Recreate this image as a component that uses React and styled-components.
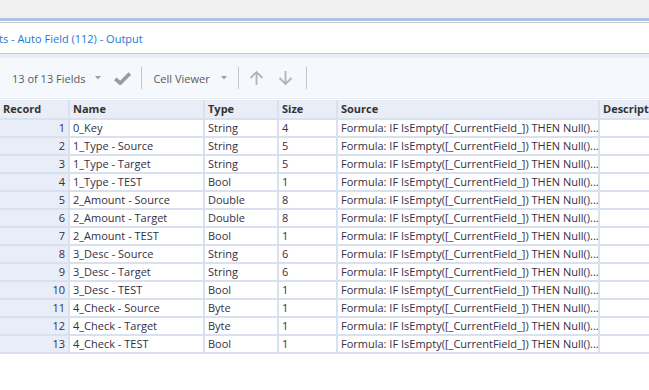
import React from 'react'
import styled, { createGlobalStyle } from 'styled-components'

const GlobalStyle = createGlobalStyle`
  body {
    margin: 0;
    background: #ffffff;
    font-family: 'Open Sans', 'Noto Sans', sans-serif;
    overflow: hidden;
  }
`

const fields = [
  ['0_Key', 'String', '4'],
  ['1_Type - Source', 'String', '5'],
  ['1_Type - Target', 'String', '5'],
  ['1_Type - TEST', 'Bool', '1'],
  ['2_Amount - Source', 'Double', '8'],
  ['2_Amount - Target', 'Double', '8'],
  ['2_Amount - TEST', 'Bool', '1'],
  ['3_Desc - Source', 'String', '6'],
  ['3_Desc - Target', 'String', '6'],
  ['3_Desc - TEST', 'Bool', '1'],
  ['4_Check - Source', 'Byte', '1'],
  ['4_Check - Target', 'Byte', '1'],
  ['4_Check - TEST', 'Bool', '1'],
]

const formula = 'Formula: IF IsEmpty([_CurrentField_]) THEN Null()...'

const Caret = () => (
  <svg width='6' height='4' viewBox='0 0 6 4'>
    <path d='M0 0 L6 0 L3 3.5 Z' fill='#a0a0a0' />
  </svg>
)

const Check = () => (
  <svg width='17' height='13' viewBox='0 0 17 13'>
    <path d='M1.3 6.8 L6.2 11.2 L15.8 1.6' fill='none' stroke='#9b9b9b' strokeWidth='3.6' />
  </svg>
)

const Arrow = ({ down }) => (
  <svg width='15' height='16' viewBox='0 0 15 16' style={down ? { transform: 'rotate(180deg)' } : undefined}>
    <path d='M7.5 15 L7.5 2 M1.5 8 L7.5 2 L13.5 8' fill='none' stroke='#b4b4b4' strokeWidth='1.8' />
  </svg>
)

const App = () => {
  return (
    <Page>
      <GlobalStyle />
      <TopBand />
      <TitleBar>
        <Title>ts - Auto Field (112) - Output</Title>
      </TitleBar>
      <Toolbar>
        <ToolLabel>13 of 13 Fields</ToolLabel>
        <Item $l={10}><Caret /></Item>
        <Item $l={13}><Check /></Item>
        <Divider $l={10} />
        <ToolLabel $l={11}>Cell Viewer</ToolLabel>
        <Item $l={11}><Caret /></Item>
        <Divider $l={11} />
        <Item $l={10}><Arrow /></Item>
        <Item $l={14}><Arrow down /></Item>
        <Divider $l={13} />
      </Toolbar>
      <Grid>
        <HeadCell>Record</HeadCell>
        <HeadCell>Name</HeadCell>
        <HeadCell>Type</HeadCell>
        <HeadCell>Size</HeadCell>
        <HeadCell>Source</HeadCell>
        <HeadCell>Description</HeadCell>
        {fields.map(([name, type, size], i) => (
          <React.Fragment key={name}>
            <RecordCell>{i + 1}</RecordCell>
            <Cell>{name}</Cell>
            <Cell>{type}</Cell>
            <Cell>{size}</Cell>
            <Cell>{formula}</Cell>
            <Cell />
          </React.Fragment>
        ))}
      </Grid>
    </Page>
  )
}

const Page = styled.div`
  width: 649px;
  height: 390px;
  background: #ffffff;
  overflow: hidden;
`

const TopBand = styled.div`
  height: 18px;
  background: #f0f0f0;
  border-bottom: 3px solid #b1c1e1;
`

const TitleBar = styled.div`
  height: 30px;
  margin-top: 1px;
  border-top: 1px solid #c9c9c9;
  border-bottom: 1px solid #c9c9c9;
  background: #ffffff;
  display: flex;
  align-items: center;
`

const Title = styled.span`
  font-size: 11px;
  color: #1f78cf;
  margin-left: -1px;
`

const Toolbar = styled.div`
  height: 40px;
  border-top: 4px solid #e9eef7;
  border-bottom: 1px solid #e8ecf3;
  background: #f5f8fd;
  display: flex;
  align-items: center;
  padding-left: 12px;
`

const ToolLabel = styled.span`
  font-size: 11px;
  color: #5a5a5a;
  margin-left: ${(p) => p.$l || 0}px;
`

const Item = styled.span`
  display: flex;
  margin-left: ${(p) => p.$l || 0}px;
`

const Divider = styled.span`
  width: 1px;
  height: 22px;
  background: #c6c6c6;
  margin-left: ${(p) => p.$l || 0}px;
`

const Grid = styled.div`
  margin-top: 1px;
  display: grid;
  grid-template-columns: 68px 133px 72px 57px 260px 120px;
  grid-auto-rows: 16px;
  grid-template-rows: 18px;
  gap: 2px;
  background: #dae1ee;
  width: max-content;
  padding-bottom: 2px;
`

const Cell = styled.div`
  background: #ffffff;
  font-size: 11px;
  line-height: 16px;
  color: #352f45;
  padding-left: 3px;
  white-space: nowrap;
  overflow: hidden;
`

const HeadCell = styled(Cell)`
  background: #e8edf7;
  font-weight: 700;
  line-height: 18px;
  color: #333333;
`

const RecordCell = styled(Cell)`
  background: #e8edf7;
  text-align: right;
  padding: 0 3px 0 0;
`

export default App
